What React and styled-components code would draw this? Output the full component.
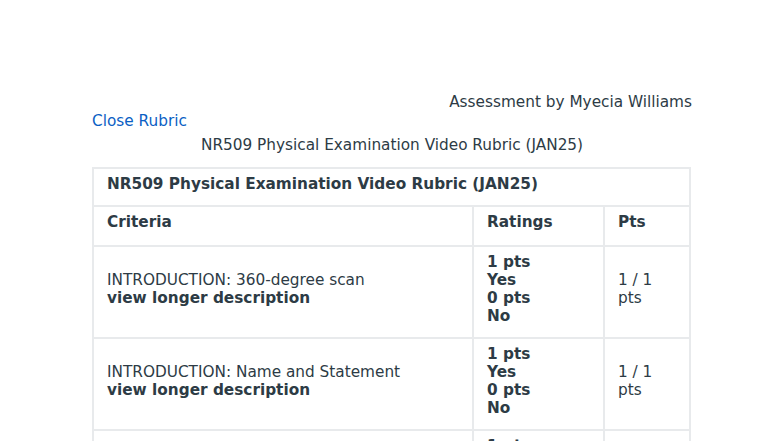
import React from "react";
import styled, { createGlobalStyle } from "styled-components";

const Global = createGlobalStyle`
  html, body { margin: 0; padding: 0; background: #ffffff; }
  body { font-family: "DejaVu Sans", "Noto Sans", sans-serif; color: #2d3b45; font-size: 15.3px; }
`;

const Page = styled.div`
  width: 600px;
  margin: 0 auto;
  padding-top: 94px;
`;

const Assessor = styled.div`
  text-align: right;
  line-height: 17px;
`;

const CloseLink = styled.a`
  display: block;
  color: #0b5fc4;
  text-decoration: none;
  line-height: 18px;
  margin-top: 1px;
  cursor: pointer;
`;

const Title = styled.div`
  text-align: center;
  line-height: 18px;
  margin: 6px 0 13px;
`;

const Table = styled.table`
  width: 597px;
  border-collapse: collapse;
  table-layout: fixed;
  line-height: 18px;
`;

const Cell = styled.td`
  border: 2px solid #e8eaec;
  padding: 6px 13px 12px;
  vertical-align: middle;
  text-align: left;
  font-weight: ${(p) => (p.$bold ? 700 : 400)};
  padding-right: ${(p) => (p.$narrow ? "22px" : "13px")};
`;

const HeadCell = styled(Cell).attrs({ as: "th" })`
  font-weight: 700;
  padding-bottom: ${(p) => (p.$tall ? "14px" : "12px")};
`;

const Strong = styled.div`
  font-weight: 700;
`;

const rows = [
  { crit: "INTRODUCTION: 360-degree scan", score: "1 / 1 pts" },
  { crit: "INTRODUCTION: Name and Statement", score: "1 / 1 pts" },
  { crit: "HEENT: Inspection of head and face", score: "1 / 1 pts" },
];

export default function App() {
  return (
    <>
      <Global />
      <Page>
        <Assessor>Assessment by Myecia Williams</Assessor>
        <CloseLink>Close Rubric</CloseLink>
        <Title>NR509 Physical Examination Video Rubric (JAN25)</Title>
        <Table>
          <colgroup>
            <col style={{ width: 380 }} />
            <col style={{ width: 131 }} />
            <col style={{ width: 86 }} />
          </colgroup>
          <thead>
            <tr>
              <HeadCell colSpan={3}>NR509 Physical Examination Video Rubric (JAN25)</HeadCell>
            </tr>
            <tr>
              <HeadCell $tall>Criteria</HeadCell>
              <HeadCell $tall>Ratings</HeadCell>
              <HeadCell $tall>Pts</HeadCell>
            </tr>
          </thead>
          <tbody>
            {rows.map((r) => (
              <tr key={r.crit}>
                <Cell>
                  <div>{r.crit}</div>
                  <Strong>view longer description</Strong>
                </Cell>
                <Cell $bold>
                  <div>1 pts</div>
                  <div>Yes</div>
                  <div>0 pts</div>
                  <div>No</div>
                </Cell>
                <Cell $narrow>{r.score}</Cell>
              </tr>
            ))}
          </tbody>
        </Table>
      </Page>
    </>
  );
}
